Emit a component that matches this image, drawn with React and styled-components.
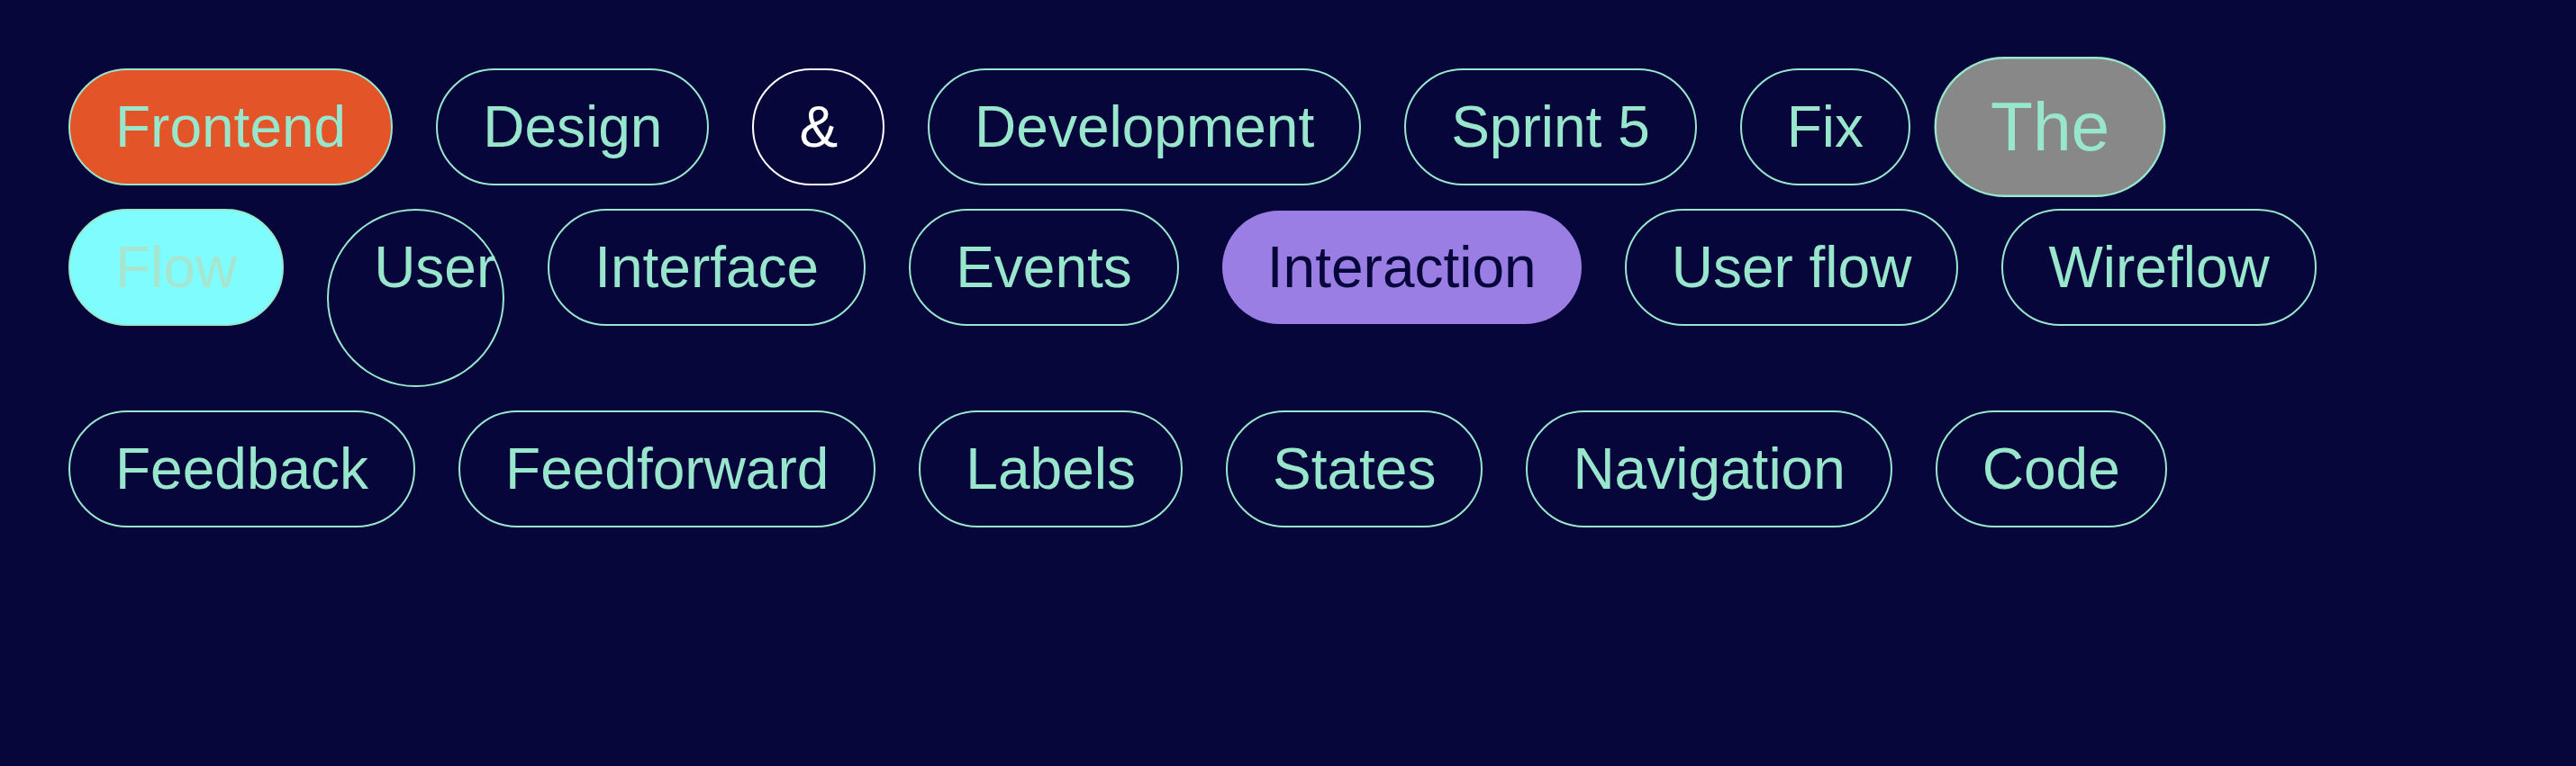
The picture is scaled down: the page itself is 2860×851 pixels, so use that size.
import React from 'react';
import styled, { createGlobalStyle, css } from 'styled-components';

const GlobalStyle = createGlobalStyle`
  html, body {
    margin: 0;
    background: #07063b;
  }
  body {
    font-family: "Liberation Sans", Arial, Helvetica, sans-serif;
  }
`;

const Cloud = styled.ul`
  list-style: none;
  margin: 0;
  padding: 76px 76px;
  max-width: 2550px;
  display: flex;
  flex-wrap: wrap;
  align-items: baseline;
  column-gap: 48px;
  row-gap: 26px;
`;

const variants = {
  outline: css``,
  hot: css`
    background: #e35528;
  `,
  light: css`
    border-color: #ffffff;
    color: #ffffff;
  `,
  grey: css`
    background: #888888;
    transform: scale(1.2);
  `,
  cyan: css`
    background: #7ffdfe;
    color: #a6e5cf;
  `,
  round: css`
    width: 197px;
    height: 198px;
    border-radius: 50%;
  `,
  purple: css`
    background: #9a7ee3;
    border: 0;
    color: #07063b;
  `,
};

const Tag = styled.li`
  box-sizing: border-box;
  flex-shrink: 0;
  font-size: 64px;
  line-height: 74px;
  padding: 26px 50px;
  border: 2px solid #98e6cc;
  border-radius: 999px;
  color: #98e6cc;
  white-space: nowrap;
  ${({ $variant }) => variants[$variant || 'outline']}
`;

const tags = [
  ['Frontend', 'hot'],
  ['Design'],
  ['&', 'light'],
  ['Development'],
  ['Sprint 5'],
  ['Fix'],
  ['The', 'grey'],
  ['Flow', 'cyan'],
  ['User', 'round'],
  ['Interface'],
  ['Events'],
  ['Interaction', 'purple'],
  ['User flow'],
  ['Wireflow'],
  ['Feedback'],
  ['Feedforward'],
  ['Labels'],
  ['States'],
  ['Navigation'],
  ['Code'],
];

export default function App() {
  return (
    <>
      <GlobalStyle />
      <Cloud>
        {tags.map(([label, variant]) => (
          <Tag key={label} $variant={variant}>
            {label}
          </Tag>
        ))}
      </Cloud>
    </>
  );
}
